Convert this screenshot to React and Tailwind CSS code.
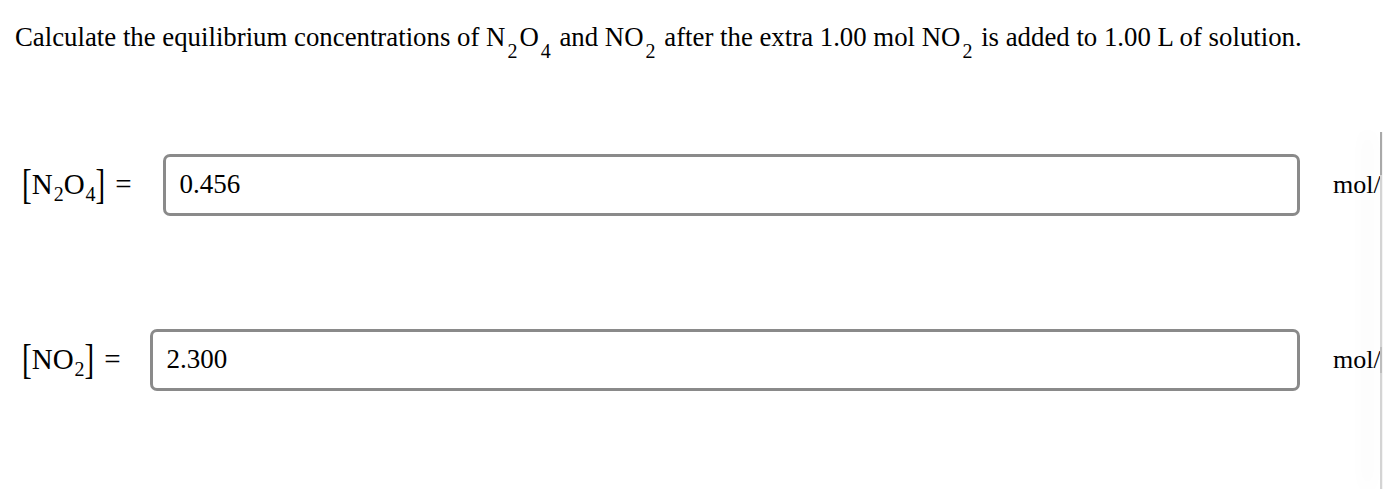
import React from "react";

function Formula({ parts }) {
  // parts: array of [symbol, subscript?]
  return (
    <span className="whitespace-nowrap">
      {parts.map(([sym, sub], i) => (
        <React.Fragment key={i}>
          <span>{sym}</span>
          {sub && <span className="relative top-[12px] ml-[2px] mr-[2px] text-[20px]">{sub}</span>}
        </React.Fragment>
      ))}
    </span>
  );
}

function Label({ parts }) {
  return (
    <div className="flex items-center text-[29px] leading-none text-black whitespace-nowrap">
      <span className="inline-block scale-y-[1.45]">[</span>
      {parts.map(([sym, sub], i) => (
        <React.Fragment key={i}>
          <span>{sym}</span>
          {sub && <span className="relative top-[9px] ml-[1px] text-[20px]">{sub}</span>}
        </React.Fragment>
      ))}
      <span className="inline-block scale-y-[1.45]">]</span>
      <span className="ml-[10px]">=</span>
    </div>
  );
}

function AnswerRow({ parts, value, gap }) {
  return (
    <div className="flex items-center h-[62px]">
      <div className="pl-[7px]">
        <Label parts={parts} />
      </div>
      <div
        className={`flex-1 h-[62px] flex items-center border-[3px] border-[#8a8a8a] rounded-[7px] bg-white pl-[14px] text-[27px] text-black ${gap}`}
      >
        {value}
      </div>
      <div className="w-[81px] pl-[33px] overflow-hidden whitespace-nowrap text-[26px] text-black">
        mol/L
      </div>
    </div>
  );
}

export default function App() {
  return (
    <div className="relative w-[1383px] h-[489px] bg-white overflow-hidden font-['Liberation_Serif','DejaVu_Serif',serif]">
      <div className="pl-[15px] pt-[23px]">
        <p className="text-[26.8px] text-black whitespace-nowrap leading-[1.107]">
          Calculate the equilibrium concentrations of{" "}
          <Formula parts={[["N", "2"], ["O", "4"]]} /> and{" "}
          <Formula parts={[["N"], ["O", "2"]]} /> after the extra 1.00 mol{" "}
          <Formula parts={[["N"], ["O", "2"]]} /> is added to 1.00 L of solution.
        </p>

        <div className="mt-[101px] pr-[2px]">
          <AnswerRow parts={[["N", "2"], ["O", "4"]]} value="0.456" gap="ml-[31px]" />
          <div className="h-[113px]" />
          <AnswerRow parts={[["N"], ["O", "2"]]} value="2.300" gap="ml-[29px]" />
        </div>
      </div>

      {/* edge of the neighbouring panel, partly covering the unit column */}
      <div className="absolute right-0 top-[132px] bottom-0 w-[3px] bg-[#f4f4f4] border-l-2 border-[#d4d4d4] shadow-[-14px_0_18px_rgba(0,0,0,0.07)]">
        <div className="absolute -left-[2px] top-0 h-[43px] w-[2px] bg-[#a9a9a9]" />
        <div className="absolute -left-[2px] top-[215px] h-[26px] w-[2px] bg-[#bdbdbd]" />
      </div>
    </div>
  );
}
